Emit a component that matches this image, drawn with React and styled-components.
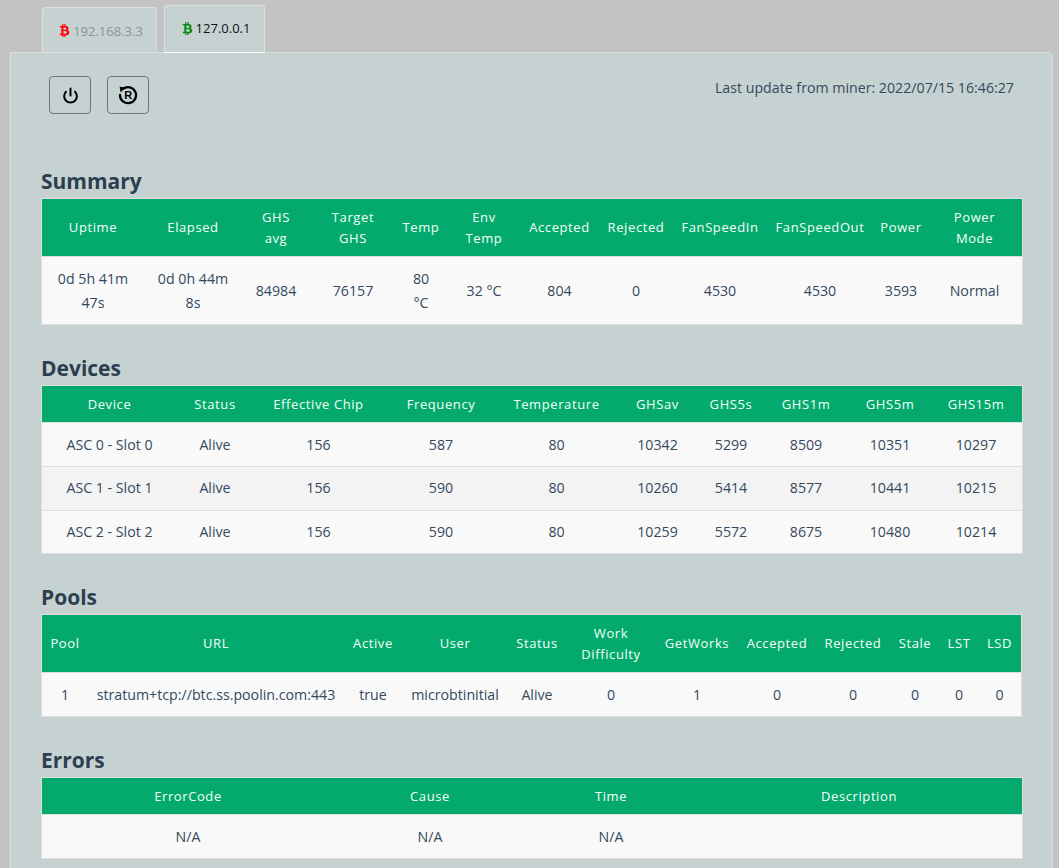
import React from 'react';
import styled, { createGlobalStyle } from 'styled-components';
import { FaBtc } from 'react-icons/fa';
import { Power } from 'lucide-react';

const summary = {
  title: 'Summary',
  cols: [
    ['Uptime', 102], ['Elapsed', 98], ['GHS\navg', 68], ['Target\nGHS', 86], ['Temp', 50], ['Env\nTemp', 76],
    ['Accepted', 75], ['Rejected', 78], ['FanSpeedIn', 90], ['FanSpeedOut', 110], ['Power', 52], ['Power\nMode', 95],
  ],
  rows: [['0d 5h 41m\n47s', '0d 0h 44m\n8s', '84984', '76157', '80\n°C', '32 °C', '804', '0', '4530', '4530', '3593', 'Normal']],
};

const devices = {
  title: 'Devices',
  cols: [
    ['Device', 135], ['Status', 76], ['Effective Chip', 131], ['Frequency', 114], ['Temperature', 117],
    ['GHSav', 85], ['GHS5s', 62], ['GHS1m', 88], ['GHS5m', 80], ['GHS15m', 92],
  ],
  rows: [
    ['ASC 0 - Slot 0', 'Alive', '156', '587', '80', '10342', '5299', '8509', '10351', '10297'],
    ['ASC 1 - Slot 1', 'Alive', '156', '590', '80', '10260', '5414', '8577', '10441', '10215'],
    ['ASC 2 - Slot 2', 'Alive', '156', '590', '80', '10259', '5572', '8675', '10480', '10214'],
  ],
};

const pools = {
  title: 'Pools',
  cols: [
    ['Pool', 46], ['URL', 256], ['Active', 58], ['User', 106], ['Status', 58], ['Work\nDifficulty', 90],
    ['GetWorks', 82], ['Accepted', 78], ['Rejected', 74], ['Stale', 50], ['LST', 38], ['LSD', 43],
  ],
  rows: [['1', 'stratum+tcp://btc.ss.poolin.com:443', 'true', 'microbtinitial', 'Alive', '0', '1', '0', '0', '0', '0', '0']],
};

const errors = {
  title: 'Errors',
  cols: [['ErrorCode', 292], ['Cause', 192], ['Time', 170], ['Description', 326]],
  rows: [['N/A', 'N/A', 'N/A', '']],
};

function RestartIcon() {
  return (
    <svg width="20" height="20" viewBox="0 0 20 20" fill="none">
      <path d="M5 3.9A8 8 0 1 1 2 10" stroke="currentColor" strokeWidth="2.3" strokeLinecap="round" />
      <path d="M1.6 1.8 7.2 2.6 2.6 7.4Z" fill="currentColor" />
      <text x="10.2" y="14.1" textAnchor="middle" fontSize="11" fontWeight="700" fontFamily="'Liberation Sans', sans-serif" fill="currentColor">R</text>
    </svg>
  );
}

function DataTable({ title, cols, rows }) {
  return (
    <section>
      <Heading>{title}</Heading>
      <Table>
        <colgroup>
          {cols.map(([label, width]) => (
            <Col key={label} $width={width} />
          ))}
        </colgroup>
        <thead>
          <tr>
            {cols.map(([label]) => (
              <Th key={label}>{label}</Th>
            ))}
          </tr>
        </thead>
        <tbody>
          {rows.map((row, i) => (
            <tr key={i}>
              {row.map((cell, j) => (
                <Td key={j}>{cell}</Td>
              ))}
            </tr>
          ))}
        </tbody>
      </Table>
    </section>
  );
}

export default function App() {
  return (
    <>
      <GlobalStyle />
      <Page>
        <Tabs>
          <Tab>
            <BtcMark $color="#ff0000" />
            192.168.3.3
          </Tab>
          <Tab $active>
            <BtcMark $color="#0a8a12" />
            127.0.0.1
          </Tab>
        </Tabs>
        <Panel>
          <Toolbar>
            <Buttons>
              <IconButton aria-label="Power">
                <Power size={17} strokeWidth={2.8} />
              </IconButton>
              <IconButton aria-label="Restart">
                <RestartIcon />
              </IconButton>
            </Buttons>
            <LastUpdate>Last update from miner: 2022/07/15 16:46:27</LastUpdate>
          </Toolbar>
          <Sections>
            <DataTable {...summary} />
            <DataTable {...devices} />
            <DataTable {...pools} />
            <DataTable {...errors} />
          </Sections>
        </Panel>
      </Page>
    </>
  );
}

const GlobalStyle = createGlobalStyle`
  html, body {
    margin: 0;
    height: 868px;
    overflow: hidden;
    background: #c3c3c3;
    font-family: 'Open Sans', 'Noto Sans', sans-serif;
    font-size: 14.2px;
    color: #34495e;
  }
`;

const Page = styled.div`
  padding: 5px 6px 0 10px;
`;

const Tabs = styled.div`
  display: flex;
  align-items: flex-end;
  gap: 7px;
  padding-left: 32px;
  height: 47px;
`;

const Tab = styled.div`
  display: flex;
  align-items: center;
  justify-content: center;
  gap: 2px;
  box-sizing: border-box;
  height: ${(p) => (p.$active ? '48px' : '45px')};
  width: ${(p) => (p.$active ? '101px' : '115px')};
  padding: ${(p) => (p.$active ? '0 0 2px 2px' : '2px 0 0 2px')};
  margin-bottom: ${(p) => (p.$active ? '-1px' : '0')};
  font-size: 13px;
  background: #c6d2d2;
  border: 1px solid #dcdfdf;
  border-bottom-color: ${(p) => (p.$active ? '#ffffff' : '#c9d3d3')};
  border-radius: 3px 3px 0 0;
  color: ${(p) => (p.$active ? '#111' : '#8a9395')};
  position: relative;
  z-index: ${(p) => (p.$active ? 1 : 0)};
`;

const BtcMark = styled(FaBtc)`
  color: ${(p) => p.$color};
  font-size: 13px;
`;

const Panel = styled.div`
  box-sizing: border-box;
  height: 830px;
  padding: 23px 31px 0 30px;
  background: #c6d2d2;
  border: 1px solid #dcdfdf;
  border-bottom: 0;
  border-radius: 0 6px 0 0;
`;

const Toolbar = styled.div`
  display: flex;
  justify-content: space-between;
  margin-bottom: 56px;
`;

const Buttons = styled.div`
  display: flex;
  gap: 16px;
  padding-left: 8px;
`;

const IconButton = styled.button`
  display: flex;
  align-items: center;
  justify-content: center;
  width: 42px;
  height: 38px;
  padding: 0;
  background: transparent;
  border: 1px solid #6c757d;
  border-radius: 4px;
  color: #000;
`;

const LastUpdate = styled.div`
  padding: 1px 7px 0 0;
  line-height: 21px;
`;

const Sections = styled.div`
  display: flex;
  flex-direction: column;
  gap: 32px;
`;

const Heading = styled.h3`
  margin: 0;
  height: 28px;
  line-height: 22px;
  font-size: 21px;
  font-weight: 700;
  color: #2c3e50;
`;

const Table = styled.table`
  width: 980px;
  table-layout: fixed;
  border-collapse: separate;
  border-spacing: 0;
  border: 1px solid #dedede;
`;

const Col = styled.col`
  width: ${(p) => p.$width}px;
`;

const Th = styled.th`
  padding: 7.5px 0;
  line-height: 21px;
  white-space: pre-line;
  font-size: 13px;
  font-weight: 500;
  letter-spacing: 0.6px;
  color: #f4fff8;
  background: #04aa6d;
  border-bottom: 1px solid #dedede;
`;

const Td = styled.td`
  padding: 9.5px 0;
  line-height: 24px;
  white-space: pre-line;
  text-align: center;
  background: #f9f9f9;

  tr + tr > & {
    border-top: 1px solid #dedede;
    padding-top: 9.25px;
    padding-bottom: 9.25px;
  }

  tr:nth-child(even) > & {
    background: #f3f3f3;
  }
`;
